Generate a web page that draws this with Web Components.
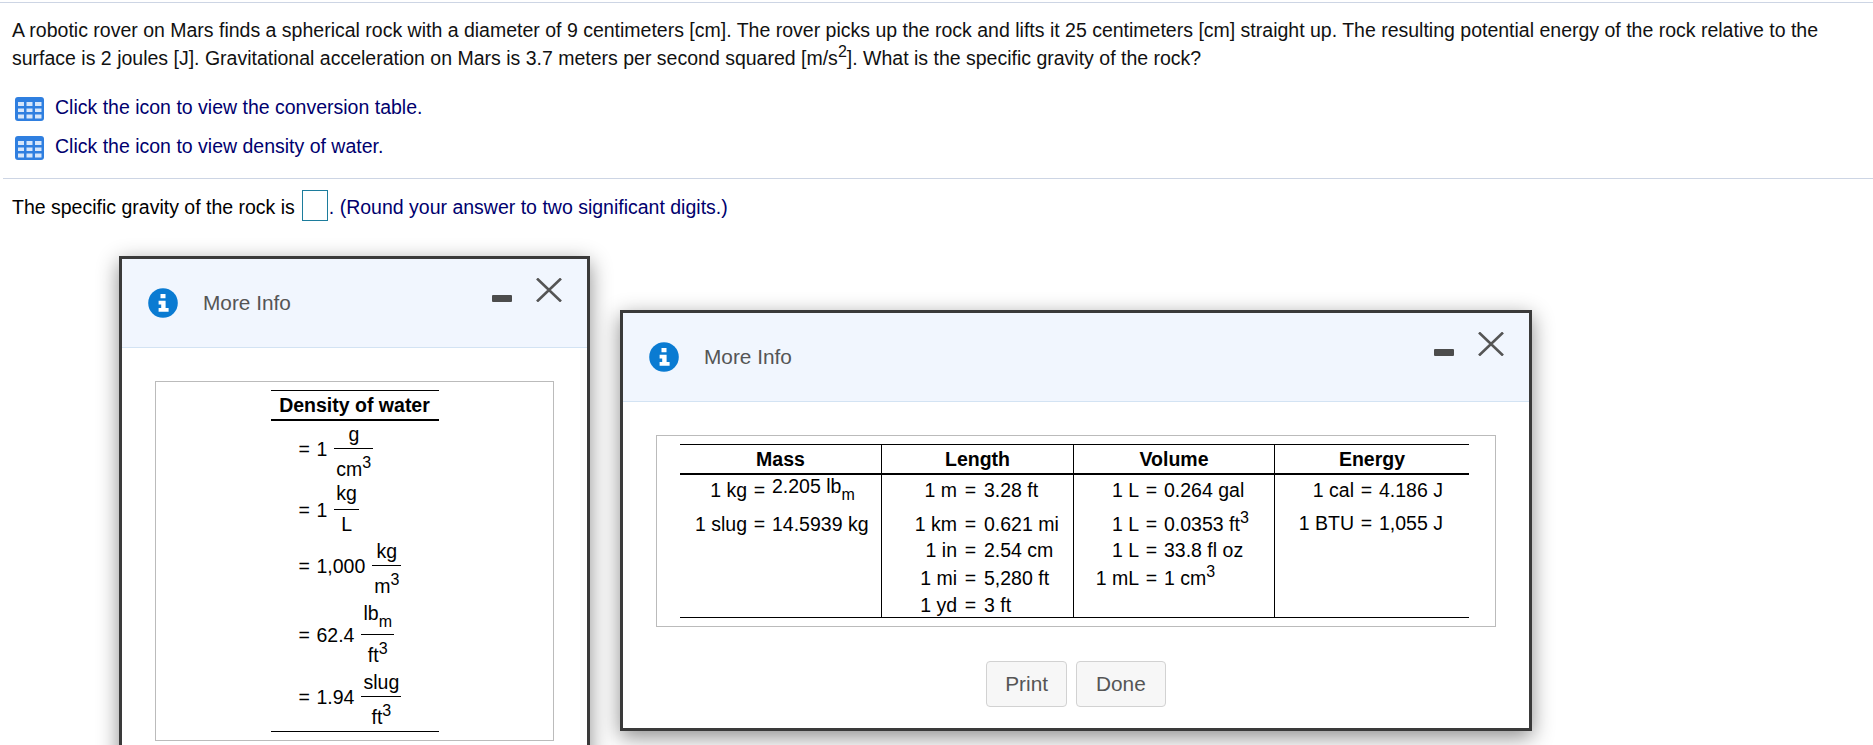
<!DOCTYPE html>
<html>
<head>
<meta charset="utf-8">
<title>Specific gravity</title>
<style>
    body {
        margin: 0;
        background: #fff;
        font-family: "Liberation Sans", Arial, sans-serif;
    }
</style>
</head>
<body>
<rover-page>
    <question-text>A robotic rover on Mars finds a spherical rock with a diameter of 9 centimeters [cm]. The rover picks up the rock and lifts it 25 centimeters [cm] straight up. The resulting potential energy of the rock relative to the surface is 2 joules [J]. Gravitational acceleration on Mars is 3.7 meters per second squared [m/s<u-sup>2</u-sup>]. What is the specific gravity of the rock?</question-text>
    <table-link>Click the icon to view the conversion table.</table-link>
    <table-link>Click the icon to view density of water.</table-link>
    <answer-line></answer-line>

    <info-window x="119" y="256" w="471">
        <density-card>
            <density-row value="1" n="28" d="33"><span slot="num">g</span><span slot="den">cm<u-sup>3</u-sup></span></density-row>
            <density-row value="1" n="28" d="26" nudge="2" den-pad="4"><span slot="num">kg</span><span slot="den">L</span></density-row>
            <density-row value="1,000" n="30" d="32"><span slot="num">kg</span><span slot="den">m<u-sup>3</u-sup></span></density-row>
            <density-row value="62.4" n="37" d="31" nudge="7"><span slot="num">lb<u-sub>m</u-sub></span><span slot="den">ft<u-sup>3</u-sup></span></density-row>
            <density-row value="1.94" n="31" d="33"><span slot="num">slug</span><span slot="den">ft<u-sup>3</u-sup></span></density-row>
        </density-card>
    </info-window>

    <info-window x="620" y="310" w="912" buttons>
        <unit-card>
            <unit-col title="Mass" left="67" eq="25">
                <unit-row><span slot="l">1 kg</span><span slot="r"><u-raise>2.205 lb<u-sub>m</u-sub></u-raise></span></unit-row>
                <unit-row top="8"><span slot="l">1 slug</span><span slot="r">14.5939 kg</span></unit-row>
            </unit-col>
            <unit-col title="Length" left="75" eq="27">
                <unit-row><span slot="l">1 m</span><span slot="r">3.28 ft</span></unit-row>
                <unit-row top="8"><span slot="l">1 km</span><span slot="r">0.621 mi</span></unit-row>
                <unit-row><span slot="l">1 in</span><span slot="r">2.54 cm</span></unit-row>
                <unit-row top="2"><span slot="l">1 mi</span><span slot="r">5,280 ft</span></unit-row>
                <unit-row top="1"><span slot="l">1 yd</span><span slot="r">3 ft</span></unit-row>
            </unit-col>
            <unit-col title="Volume" left="65" eq="25">
                <unit-row><span slot="l">1 L</span><span slot="r">0.264 gal</span></unit-row>
                <unit-row top="8"><span slot="l">1 L</span><span slot="r">0.0353 ft<u-sup>3</u-sup></span></unit-row>
                <unit-row><span slot="l">1 L</span><span slot="r">33.8 fl oz</span></unit-row>
                <unit-row top="2"><span slot="l">1 mL</span><span slot="r">1 cm<u-sup>3</u-sup></span></unit-row>
            </unit-col>
            <unit-col title="Energy" left="79" eq="25">
                <unit-row><span slot="l">1 cal</span><span slot="r">4.186 J</span></unit-row>
                <unit-row top="7"><span slot="l">1 BTU</span><span slot="r">1,055 J</span></unit-row>
            </unit-col>
        </unit-card>
    </info-window>
</rover-page>

<script>
function define(name, css, html, setup) {
    customElements.define(name, class extends HTMLElement {
        constructor() {
            super();
            this.attachShadow({ mode: 'open' });
        }
        connectedCallback() {
            const markup = typeof html === 'function' ? html(this) : html;
            this.shadowRoot.innerHTML = `<style>${css}</style>${markup}`;
            if (setup) setup(this);
        }
    });
}

// small text helpers
define('u-sup', ':host{font-size:16px;line-height:0;vertical-align:8px}', '<slot></slot>');
define('u-sub', ':host{font-size:16px;line-height:0;vertical-align:-7px}', '<slot></slot>');
define('u-raise', ':host{line-height:0;vertical-align:4px}', '<slot></slot>');

define('rover-page', `
    :host {
        display: block;
        position: relative;
        height: 745px;
        overflow: hidden;
        box-sizing: border-box;
        padding-top: 2px;
        font-family: "Liberation Sans", Arial, sans-serif;
        font-size: 19.5px;
        color: #000;
    }
    #top { height: 1px; background: #cdd5e4; margin-bottom: 13px; }
`, '<div id="top"></div><slot></slot>');

define('question-text', `
    :host {
        display: block;
        padding: 0 12px 25px;
        line-height: 28px;
        color: #111;
    }
`, '<slot></slot>');

define('table-link', `
    :host {
        display: flex;
        align-items: center;
        gap: 11px;
        height: 24px;
        margin: 0 0 15px 15px;
        color: #00006e;
        white-space: nowrap;
    }
    svg { display: block; }
    span { margin-top: -3px; }
`, `<svg width="29" height="24" viewBox="0 0 29 24">
        <rect width="29" height="24" rx="3" fill="#2f7fe0"/>
        <g fill="#d6e6fa">
            <rect x="3" y="5" width="6" height="4"/><rect x="11.5" y="5" width="6" height="4"/><rect x="20" y="5" width="6.5" height="4"/>
            <rect x="3" y="11.5" width="6" height="3.5"/><rect x="11.5" y="11.5" width="6" height="3.5"/><rect x="20" y="11.5" width="6.5" height="3.5"/>
            <rect x="3" y="17.5" width="6" height="4"/><rect x="11.5" y="17.5" width="6" height="4"/><rect x="20" y="17.5" width="6.5" height="4"/>
        </g>
    </svg><span><slot></slot></span>`);

define('answer-line', `
    :host {
        display: flex;
        align-items: center;
        margin: 18px 0 0 3px;
        padding: 11px 0 0 9px;
        border-top: 1px solid #cdd5e4;
        white-space: pre;
    }
    span { margin-top: 3px; }
    #box {
        width: 24px;
        height: 29px;
        margin: 0 1px 0 7px;
        border: 1px solid #1c7c9c;
    }
    #hint { color: #00006e; }
`, '<span>The specific gravity of the rock is</span><div id="box"></div><span id="hint">. (Round your answer to two significant digits.)</span>');

define('info-window', `
    :host {
        display: block;
        position: absolute;
        box-sizing: border-box;
        border: 3px solid #3a3a3a;
        background: #fff;
        box-shadow: 0 6px 20px rgba(0,0,0,.45);
    }
    header {
        display: flex;
        align-items: center;
        height: 89px;
        box-sizing: border-box;
        padding: 0 25px 0 26px;
        background: #f1f6fe;
        border-bottom: 1px solid #d3e3f3;
        color: #555;
        font-size: 20.8px;
    }
    #title { margin-left: 25px; flex: 1; }
    #controls { display: flex; align-self: flex-start; margin-top: 19px; gap: 24px; }
    #minus { width: 20px; height: 7px; margin-top: 17px; background: #4c4c4c; border-radius: 1px; }
    main { padding: 33px 33px 21px; }
    #actions { display: flex; justify-content: center; gap: 9px; margin-top: 34px; }
    .btn {
        height: 46px;
        box-sizing: border-box;
        padding: 0 18px;
        display: flex;
        align-items: center;
        background: #f7f7f7;
        border: 1px solid #d2d2d2;
        border-radius: 4px;
        color: #555;
        font-size: 20.8px;
    }
    .btn + .btn { padding: 0 19px; }
`, (el) => `
    <header>
        <svg width="30" height="30" viewBox="0 0 30 30">
            <circle cx="15" cy="15" r="14.8" fill="#0a7bd2"/>
            <path fill="#fff" d="M12.5 6h5v4.3h-5zM10.6 12.7h7v7.3h3v3.7h-10v-3.7h2.6v-3.6h-2.6z"/>
        </svg>
        <span id="title">More Info</span>
        <div id="controls">
            <div id="minus"></div>
            <svg width="26" height="24" viewBox="0 0 26 24"><path d="M1 .5 25 23.5M25 .5 1 23.5" stroke="#555" stroke-width="2.6" fill="none"/></svg>
        </div>
    </header>
    <main>
        <slot></slot>
        ${el.hasAttribute('buttons') ? '<div id="actions"><div class="btn">Print</div><div class="btn">Done</div></div>' : ''}
    </main>
`, (el) => {
    el.style.left = el.getAttribute('x') + 'px';
    el.style.top = el.getAttribute('y') + 'px';
    el.style.width = el.getAttribute('w') + 'px';
});

define('density-card', `
    :host {
        display: block;
        padding: 8px 0;
        border: 1px solid #bbb;
    }
    #table { width: 168px; margin: 0 auto; border-bottom: 1px solid #000; }
    #head {
        height: 28px;
        line-height: 28px;
        text-align: center;
        font-weight: bold;
        border-top: 1px solid #000;
        border-bottom: 2px solid #000;
    }
    #rows { padding-left: 28px; padding-bottom: 1px; }
`, '<div id="table"><div id="head">Density of water</div><div id="rows"><slot></slot></div></div>');

define('density-row', `
    :host {
        display: flex;
        align-items: flex-start;
        font-size: 19.5px;
        line-height: 20px;
    }
    #eq { width: 18px; }
    #val { margin-right: 7px; }
    #frac { display: flex; flex-direction: column; text-align: center; }
    #num {
        display: flex;
        align-items: flex-end;
        justify-content: center;
        box-sizing: border-box;
        padding: 0 2px;
        border-bottom: 1px solid #000;
    }
    #den { box-sizing: border-box; padding: 0 2px; }
`, (el) => {
    const n = +el.getAttribute('n');
    const d = +el.getAttribute('d');
    const nudge = +(el.getAttribute('nudge') || 0);
    const denPad = el.getAttribute('den-pad') || 10;
    return `
        <span id="eq" style="margin-top:${n - 10}px">=</span>
        <span id="val" style="margin-top:${n - 10}px">${el.getAttribute('value')}</span>
        <div id="frac">
            <div id="num" style="height:${n}px;padding-bottom:${4 + nudge}px"><slot name="num"></slot></div>
            <div id="den" style="height:${d}px;padding-top:${denPad}px"><slot name="den"></slot></div>
        </div>`;
});

define('unit-card', `
    :host {
        display: block;
        padding: 8px 26px 8px 23px;
        border: 1px solid #bbb;
    }
    #table {
        display: grid;
        grid-template-columns: 201px 192px 201px 195px;
        border-top: 1px solid #000;
        border-bottom: 1px solid #000;
    }
`, '<div id="table"><slot></slot></div>');

define('unit-col', `
    :host {
        display: block;
        box-sizing: border-box;
        height: 172px;
    }
    :host(:not(:first-child)) { border-left: 1px solid #000; }
    #head {
        height: 28px;
        line-height: 28px;
        text-align: center;
        font-weight: bold;
        border-bottom: 2px solid #000;
    }
    :host(:not(:first-child)) #head { margin-left: -1px; padding-left: 1px; }
    #rows { padding-top: 2px; }
`, (el) => `
    <div id="head">${el.getAttribute('title')}</div>
    <div id="rows" style="--left:${el.getAttribute('left')}px;--eq:${el.getAttribute('eq')}px"><slot></slot></div>
`);

define('unit-row', `
    :host {
        display: grid;
        grid-template-columns: var(--left) var(--eq) auto;
        height: 26px;
        line-height: 26px;
        white-space: nowrap;
    }
    #l { text-align: right; }
    #e { text-align: center; }
`, '<div id="l"><slot name="l"></slot></div><div id="e">=</div><div><slot name="r"></slot></div>',
(el) => {
    if (el.hasAttribute('top')) el.style.marginTop = el.getAttribute('top') + 'px';
});
</script>
</body>
</html>
